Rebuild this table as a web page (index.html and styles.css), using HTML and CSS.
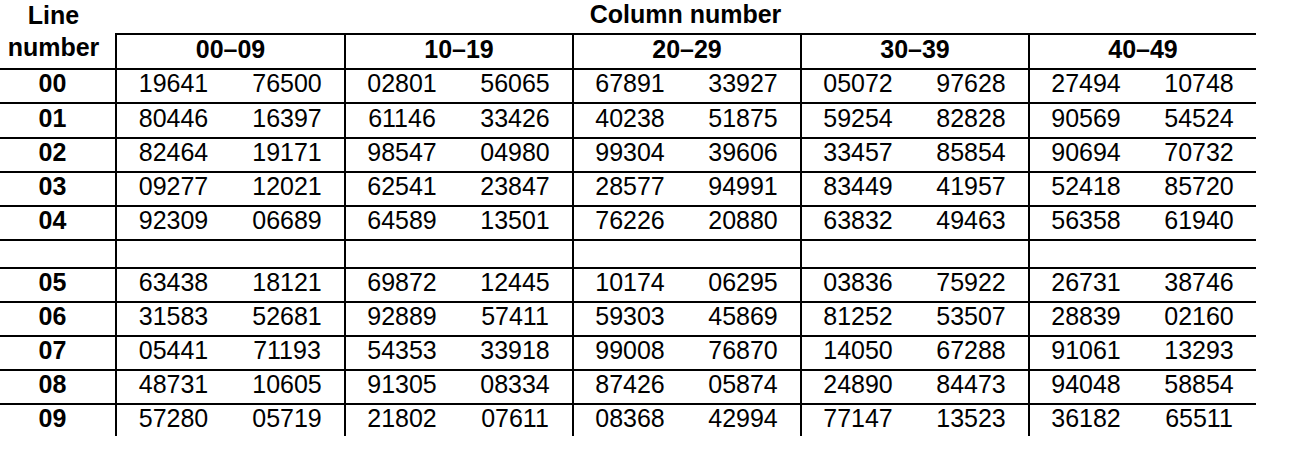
FILE: index.html
```html
<!DOCTYPE html>
<html lang="en">
<head>
<meta charset="utf-8">
<title>Random number table</title>
<link rel="stylesheet" href="styles.css">
</head>
<body>
<div class="rtable" role="table">
  <div class="corner"><span>Line</span><span>number</span></div>
  <div class="colhead">Column number</div>
  <div class="grouphead gs">00–09</div>
  <div class="grouphead gs">10–19</div>
  <div class="grouphead gs">20–29</div>
  <div class="grouphead gs">30–39</div>
  <div class="grouphead gs">40–49</div>

  <div class="rowlabel">00</div>
  <div class="num gs">19641</div><div class="num">76500</div>
  <div class="num gs">02801</div><div class="num">56065</div>
  <div class="num gs">67891</div><div class="num">33927</div>
  <div class="num gs">05072</div><div class="num">97628</div>
  <div class="num gs">27494</div><div class="num">10748</div>

  <div class="rowlabel">01</div>
  <div class="num gs">80446</div><div class="num">16397</div>
  <div class="num gs">61146</div><div class="num">33426</div>
  <div class="num gs">40238</div><div class="num">51875</div>
  <div class="num gs">59254</div><div class="num">82828</div>
  <div class="num gs">90569</div><div class="num">54524</div>

  <div class="rowlabel">02</div>
  <div class="num gs">82464</div><div class="num">19171</div>
  <div class="num gs">98547</div><div class="num">04980</div>
  <div class="num gs">99304</div><div class="num">39606</div>
  <div class="num gs">33457</div><div class="num">85854</div>
  <div class="num gs">90694</div><div class="num">70732</div>

  <div class="rowlabel">03</div>
  <div class="num gs">09277</div><div class="num">12021</div>
  <div class="num gs">62541</div><div class="num">23847</div>
  <div class="num gs">28577</div><div class="num">94991</div>
  <div class="num gs">83449</div><div class="num">41957</div>
  <div class="num gs">52418</div><div class="num">85720</div>

  <div class="rowlabel">04</div>
  <div class="num gs">92309</div><div class="num">06689</div>
  <div class="num gs">64589</div><div class="num">13501</div>
  <div class="num gs">76226</div><div class="num">20880</div>
  <div class="num gs">63832</div><div class="num">49463</div>
  <div class="num gs">56358</div><div class="num">61940</div>

  <div class="rowlabel"></div>
  <div class="blank gs"></div>
  <div class="blank gs"></div>
  <div class="blank gs"></div>
  <div class="blank gs"></div>
  <div class="blank gs"></div>

  <div class="rowlabel">05</div>
  <div class="num gs">63438</div><div class="num">18121</div>
  <div class="num gs">69872</div><div class="num">12445</div>
  <div class="num gs">10174</div><div class="num">06295</div>
  <div class="num gs">03836</div><div class="num">75922</div>
  <div class="num gs">26731</div><div class="num">38746</div>

  <div class="rowlabel">06</div>
  <div class="num gs">31583</div><div class="num">52681</div>
  <div class="num gs">92889</div><div class="num">57411</div>
  <div class="num gs">59303</div><div class="num">45869</div>
  <div class="num gs">81252</div><div class="num">53507</div>
  <div class="num gs">28839</div><div class="num">02160</div>

  <div class="rowlabel">07</div>
  <div class="num gs">05441</div><div class="num">71193</div>
  <div class="num gs">54353</div><div class="num">33918</div>
  <div class="num gs">99008</div><div class="num">76870</div>
  <div class="num gs">14050</div><div class="num">67288</div>
  <div class="num gs">91061</div><div class="num">13293</div>

  <div class="rowlabel">08</div>
  <div class="num gs">48731</div><div class="num">10605</div>
  <div class="num gs">91305</div><div class="num">08334</div>
  <div class="num gs">87426</div><div class="num">05874</div>
  <div class="num gs">24890</div><div class="num">84473</div>
  <div class="num gs">94048</div><div class="num">58854</div>

  <div class="rowlabel">09</div>
  <div class="num gs">57280</div><div class="num">05719</div>
  <div class="num gs">21802</div><div class="num">07611</div>
  <div class="num gs">08368</div><div class="num">42994</div>
  <div class="num gs">77147</div><div class="num">13523</div>
  <div class="num gs">36182</div><div class="num">65511</div>
</div>
</body>
</html>
```
FILE: styles.css
```css
* {
  box-sizing: border-box;
}

html, body {
  margin: 0;
  padding: 0;
  background: #ffffff;
}

body {
  font-family: "Liberation Sans", Arial, sans-serif;
  font-size: 25px;
  color: #000000;
}

.rtable {
  display: grid;
  width: 1256px;
  grid-template-columns: 115px 115px repeat(9, 114px);
  grid-template-rows: 33px 35px 34px 35px 34px 34px 34px 28px 34px 34px 34px 34px 33px;
}

.rtable > div {
  display: flex;
  align-items: center;
  justify-content: center;
  line-height: 28px;
  white-space: nowrap;
}

.corner {
  grid-row: span 2;
  flex-direction: column;
  justify-content: flex-start !important;
  gap: 2px;
  font-weight: bold;
  padding-right: 8px;
}

.corner span {
  display: block;
  line-height: 30px;
}

.colhead {
  grid-column: span 10;
  font-weight: bold;
  padding-bottom: 5px;
}

.grouphead {
  grid-column: span 2;
  font-weight: bold;
  border-top: 2px solid #000;
  padding-bottom: 6px;
}

.rowlabel {
  font-weight: bold;
  border-top: 2px solid #000;
  padding-right: 10px;
  padding-bottom: 6px;
}

.num {
  border-top: 2px solid #000;
  padding-bottom: 6px;
}

.blank {
  grid-column: span 2;
  border-top: 2px solid #000;
}

.gs {
  border-left: 2px solid #000;
}
```
